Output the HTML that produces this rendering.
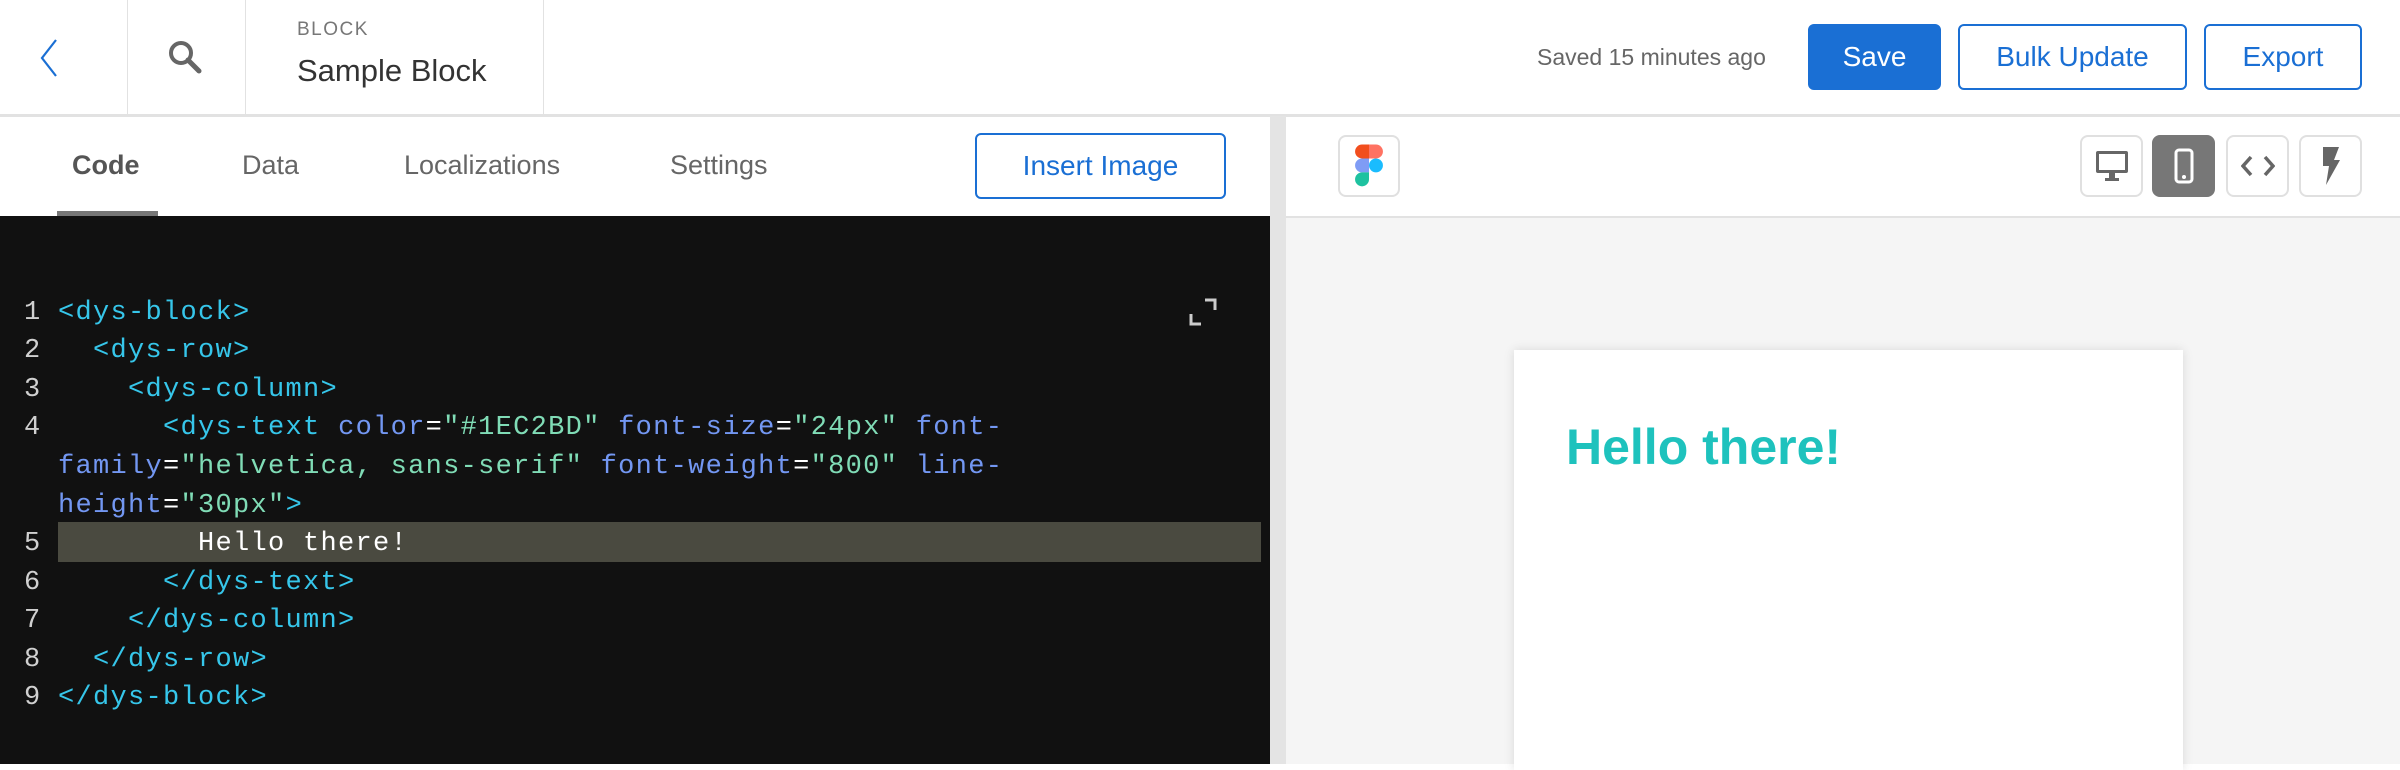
<!DOCTYPE html>
<html><head><meta charset="utf-8"><style>
*{box-sizing:border-box;margin:0;padding:0}
body{width:2400px;height:764px;position:relative;overflow:hidden;background:#fff;font-family:"Liberation Sans",sans-serif}
.a{position:absolute}
.btn{position:absolute;border:2px solid #1a6fd4;border-radius:6px;color:#1a6fd4;font-size:28px;display:flex;align-items:center;justify-content:center;background:#fff}
.code{position:absolute;left:0;top:216px;width:1270px;height:548px;background:#111}
.ln{position:absolute;left:24px;color:#d0d0d0;font-family:"Liberation Mono",monospace;font-size:27px}
.cl{position:absolute;left:58px;white-space:pre;font-family:"Liberation Mono",monospace;font-size:27px;letter-spacing:1.3px;color:#fff}
.t{color:#36c6ea}.at{color:#7397f2}.s{color:#80dcb6}
.dev{position:absolute;top:135px;width:63px;height:62px;border:2px solid #e0e0e0;border-radius:8px;background:#fff;display:flex;align-items:center;justify-content:center}
</style></head><body>
<div class="a" style="left:0;top:114px;width:2400px;height:3px;background:#e2e2e2"></div>
<div class="a" style="left:127px;top:0;width:1px;height:115px;background:#e2e2e2"></div>
<div class="a" style="left:245px;top:0;width:1px;height:115px;background:#e2e2e2"></div>
<div class="a" style="left:543px;top:0;width:1px;height:115px;background:#e2e2e2"></div>
<svg class="a" style="left:36px;top:38px" width="28" height="40" viewBox="0 0 28 40"><path d="M20 2 L6 20 L20 38" fill="none" stroke="#1a6fd4" stroke-width="2.2"/></svg>
<svg class="a" style="left:166px;top:38px" width="40" height="40" viewBox="0 0 40 40"><circle cx="15" cy="15" r="10" fill="none" stroke="#666" stroke-width="4"/><path d="M22 22 L33 33" stroke="#666" stroke-width="5" stroke-linecap="round"/></svg>
<div class="a" style="left:297px;top:19px;font-size:19px;color:#777;letter-spacing:1.5px">BLOCK</div>
<div class="a" style="left:297px;top:53px;font-size:31px;color:#333">Sample Block</div>
<div class="a" style="left:1537px;top:44px;font-size:23px;color:#666">Saved 15 minutes ago</div>
<div class="btn" style="left:1808px;top:24px;width:133px;height:66px;background:#1a6fd4;color:#fff">Save</div>
<div class="btn" style="left:1958px;top:24px;width:229px;height:66px">Bulk Update</div>
<div class="btn" style="left:2204px;top:24px;width:158px;height:66px">Export</div>
<div class="a" style="left:72px;top:150px;font-size:27px;color:#555;font-weight:bold">Code</div>
<div class="a" style="left:242px;top:150px;font-size:27px;color:#666">Data</div>
<div class="a" style="left:404px;top:150px;font-size:27px;color:#666">Localizations</div>
<div class="a" style="left:670px;top:150px;font-size:27px;color:#666">Settings</div>
<div class="a" style="left:57px;top:211px;width:101px;height:5px;background:#777"></div>
<div class="btn" style="left:975px;top:133px;width:251px;height:66px">Insert Image</div>
<div class="a" style="left:1270px;top:116px;width:16px;height:648px;background:#e4e4e4"></div>
<div class="code"></div>
<div class="a" style="left:58px;top:522px;width:1203px;height:40px;background:#4a4a40"></div>
<svg class="a" style="left:1189px;top:298px" width="28" height="28" viewBox="0 0 28 28"><path d="M16 2 H26 V12 M12 26 H2 V16" fill="none" stroke="#ccc" stroke-width="3"/></svg>
<div class="ln" style="top:298px">1</div><div class="cl" style="top:298px"><span class="t">&lt;dys-block&gt;</span></div>
<div class="ln" style="top:336px">2</div><div class="cl" style="top:336px">  <span class="t">&lt;dys-row&gt;</span></div>
<div class="ln" style="top:375px">3</div><div class="cl" style="top:375px">    <span class="t">&lt;dys-column&gt;</span></div>
<div class="ln" style="top:413px">4</div><div class="cl" style="top:413px">      <span class="t">&lt;dys-text</span> <span class="at">color</span>=<span class="s">"#1EC2BD"</span> <span class="at">font-size</span>=<span class="s">"24px"</span> <span class="at">font-</span></div>
<div class="cl" style="top:452px"><span class="at">family</span>=<span class="s">"helvetica, sans-serif"</span> <span class="at">font-weight</span>=<span class="s">"800"</span> <span class="at">line-</span></div>
<div class="cl" style="top:491px"><span class="at">height</span>=<span class="s">"30px"</span><span class="t">&gt;</span></div>
<div class="ln" style="top:529px">5</div><div class="cl" style="top:529px">        Hello there!</div>
<div class="ln" style="top:568px">6</div><div class="cl" style="top:568px">      <span class="t">&lt;/dys-text&gt;</span></div>
<div class="ln" style="top:606px">7</div><div class="cl" style="top:606px">    <span class="t">&lt;/dys-column&gt;</span></div>
<div class="ln" style="top:645px">8</div><div class="cl" style="top:645px">  <span class="t">&lt;/dys-row&gt;</span></div>
<div class="ln" style="top:683px">9</div><div class="cl" style="top:683px"><span class="t">&lt;/dys-block&gt;</span></div>
<div class="a" style="left:1286px;top:216px;width:1114px;height:548px;background:#f5f5f5;border-top:2px solid #e2e2e2"></div>
<div class="dev" style="left:1338px;width:62px">
<svg width="30" height="45" viewBox="0 0 28 42"><path d="M1 7 A6.5 6.5 0 0 1 7.5 0.5 H14 V13.5 H7.5 A6.5 6.5 0 0 1 1 7 Z" fill="#f24e1e"/><path d="M14 0.5 H20.5 A6.5 6.5 0 0 1 20.5 13.5 H14 Z" fill="#ff7262"/><path d="M1 20 A6.5 6.5 0 0 1 7.5 13.5 H14 V26.5 H7.5 A6.5 6.5 0 0 1 1 20 Z" fill="#7f9cf5"/><circle cx="20.5" cy="20" r="6.5" fill="#1abcfe"/><path d="M1 33 A6.5 6.5 0 0 1 7.5 26.5 H14 V33 A6.5 6.5 0 0 1 1 33 Z" fill="#1ec2a0"/></svg></div>
<div class="dev" style="left:2080px"><svg width="34" height="32" viewBox="0 0 34 32"><rect x="1" y="1" width="32" height="22" rx="2" fill="#666"/><rect x="4" y="4" width="26" height="16" fill="#fff"/><rect x="14" y="23" width="6" height="5" fill="#666"/><rect x="10" y="28" width="14" height="3" fill="#666"/></svg></div>
<div class="dev" style="left:2152px;background:#777;border-color:#777"><svg width="20" height="36" viewBox="0 0 20 36"><rect x="2" y="2" width="16" height="32" rx="3" fill="none" stroke="#fff" stroke-width="3"/><circle cx="10" cy="29" r="2" fill="#fff"/></svg></div>
<div class="dev" style="left:2226px"><svg width="34" height="24" viewBox="0 0 34 24"><path d="M10 3 L2 12 L10 21 M24 3 L32 12 L24 21" fill="none" stroke="#666" stroke-width="3.5"/></svg></div>
<div class="dev" style="left:2299px"><svg width="22" height="40" viewBox="0 0 22 40"><path d="M3 1 H19 L14 14 H20 L6 39 L9 20 H3 Z" fill="#666"/></svg></div>
<div class="a" style="left:1514px;top:350px;width:669px;height:420px;background:#fff;box-shadow:0 0 10px rgba(0,0,0,0.12)"></div>
<div class="a" style="left:1566px;top:418px;font-family:'Liberation Sans',Helvetica,sans-serif;font-weight:bold;font-size:50px;color:#1EC2BD">Hello there!</div>
</body></html>
